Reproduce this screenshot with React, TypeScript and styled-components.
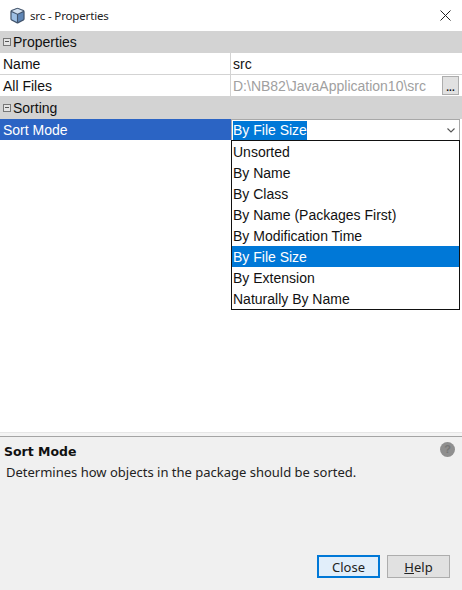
import React from "react";
import styled, { createGlobalStyle } from "styled-components";

const GlobalStyle = createGlobalStyle`
  html, body { margin: 0; padding: 0; background: #fff; }
  * { box-sizing: border-box; }
`;

const SORT_MODES = [
  "Unsorted",
  "By Name",
  "By Class",
  "By Name (Packages First)",
  "By Modification Time",
  "By File Size",
  "By Extension",
  "Naturally By Name",
];

const App = () => (
  <>
    <GlobalStyle />
    <Dialog>
      <TitleBar>
        <CubeIcon />
        <Title>src - Properties</Title>
        <CloseIcon />
      </TitleBar>
      <Sheet>
        <Section title="Properties" />
        <Row $height={22} $ruled>
          <NameCell>Name</NameCell>
          <ValueCell>src</ValueCell>
        </Row>
        <Row $height={21}>
          <NameCell>All Files</NameCell>
          <ValueCell $disabled>
            D:\NB82\JavaApplication10\src
            <BrowseButton>...</BrowseButton>
          </ValueCell>
        </Row>
        <Section title="Sorting" tall />
        <Row $height={21}>
          <NameCell $selected>Sort Mode</NameCell>
          <ComboBox>
            <ComboValue>By File Size</ComboValue>
            <ChevronIcon />
          </ComboBox>
        </Row>
        <ComboList>
          {SORT_MODES.map((mode) => (
            <ComboItem key={mode} $selected={mode === "By File Size"}>
              {mode}
            </ComboItem>
          ))}
        </ComboList>
      </Sheet>
      <Description>
        <DescriptionHeader>
          <DescriptionTitle>Sort Mode</DescriptionTitle>
          <HelpBadge>?</HelpBadge>
        </DescriptionHeader>
        <DescriptionText>
          Determines how objects in the package should be sorted.
        </DescriptionText>
      </Description>
      <Footer>
        <Button $primary>Close</Button>
        <Button>
          <u>H</u>elp
        </Button>
      </Footer>
    </Dialog>
  </>
);

export default App;

const Section = ({ title, tall }: { title: string; tall?: boolean }) => (
  <SectionHeader $tall={tall}>
    <Toggle />
    {title}
  </SectionHeader>
);

const CubeIcon = () => (
  <svg width="15" height="17" viewBox="0 0 16 18" style={{ flexShrink: 0 }}>
    <path d="M8 0.6 Q8.6 0.6 14 2.8 Q15.6 3.5 15.6 5 V12.8 Q15.6 13.8 14.5 14.4 L9 17.2 Q8 17.6 7 17.2 L1.5 14.4 Q0.4 13.8 0.4 12.8 V5 Q0.4 3.5 2 2.8 Q7.4 0.6 8 0.6 Z" fill="#42546c" />
    <path d="M8 1.8 L14 4.3 L8 7.1 L2 4.3 Z" fill="#d3e1f1" />
    <path d="M7.4 8 V15.9 L1.7 13 V5.4 Z" fill="#9dbfe4" />
    <path d="M8.6 8 V15.9 L14.3 13 V5.4 Z" fill="#5f86b6" />
  </svg>
);

const CloseIcon = () => (
  <svg width="11" height="11" viewBox="0 0 11 11" style={{ flexShrink: 0 }}>
    <path d="M0.5 0.5 L10.5 10.5 M10.5 0.5 L0.5 10.5" stroke="#222" strokeWidth="1" />
  </svg>
);

const ChevronIcon = () => (
  <svg width="8" height="5" viewBox="0 0 8 5" style={{ flexShrink: 0 }}>
    <path d="M0.5 0.5 L4 4 L7.5 0.5" fill="none" stroke="#555" strokeWidth="1.1" />
  </svg>
);

const Dialog = styled.div`
  width: 462px;
  height: 590px;
  display: flex;
  flex-direction: column;
  overflow: hidden;
  background: #fff;
  color: #111;
  font-family: "Liberation Sans", Arial, sans-serif;
  font-size: 14px;
`;

const TitleBar = styled.div`
  height: 31px;
  flex-shrink: 0;
  display: flex;
  align-items: center;
  padding: 0 11px 1px 10px;
  gap: 5px;
`;

const Title = styled.div`
  flex: 1;
  font-family: "Noto Sans", sans-serif;
  font-size: 11.5px;
  letter-spacing: -0.15px;
  color: #222;
`;

const Sheet = styled.div`
  position: relative;
  flex: 1;
  display: flex;
  flex-direction: column;
  background: #fff;
`;

const SectionHeader = styled.div<{ $tall?: boolean }>`
  height: ${(p) => (p.$tall ? "23px" : "22px")};
  display: flex;
  align-items: center;
  gap: 2px;
  padding-left: 3px;
  background: #d3d3d3;
`;

const Toggle = styled.span`
  position: relative;
  width: 8px;
  height: 8px;
  border: 1px solid #777;
  background: #e4e4e4;
  &::after {
    content: "";
    position: absolute;
    left: 1px;
    right: 1px;
    top: 2px;
    height: 1px;
    background: #555;
  }
`;

const Row = styled.div<{ $height: number; $ruled?: boolean }>`
  height: ${(p) => p.$height}px;
  display: flex;
  border-bottom: ${(p) => (p.$ruled ? "1px solid #d3d3d3" : "none")};
`;

const NameCell = styled.div<{ $selected?: boolean }>`
  width: 231px;
  display: flex;
  align-items: center;
  padding-left: 3px;
  border-right: 1px solid ${(p) => (p.$selected ? "#2b64c4" : "#d3d3d3")};
  background: ${(p) => (p.$selected ? "#2b64c4" : "#fff")};
  color: ${(p) => (p.$selected ? "#fff" : "#111")};
`;

const ValueCell = styled.div<{ $disabled?: boolean }>`
  position: relative;
  flex: 1;
  display: flex;
  align-items: center;
  padding-left: 2px;
  color: ${(p) => (p.$disabled ? "#a0a0a0" : "#111")};
`;

const BrowseButton = styled.span`
  position: absolute;
  top: 1px;
  right: 3px;
  width: 17px;
  height: 19px;
  display: flex;
  align-items: flex-end;
  justify-content: center;
  border: 1px solid #adadad;
  background: #e1e1e1;
  color: #111;
  font-weight: bold;
  font-size: 10px;
  line-height: 12px;
`;

const ComboBox = styled.div`
  flex: 1;
  display: flex;
  align-items: center;
  justify-content: space-between;
  padding: 0 4px 0 1px;
  margin-right: 2px;
  border: 1px solid #a8a8a8;
  border-bottom: none;
  background: #fff;
`;

const ComboValue = styled.span`
  background: #0078d7;
  color: #fff;
  line-height: 19px;
`;

const ComboList = styled.div`
  position: absolute;
  left: 231px;
  top: 109px;
  width: 229px;
  height: 170px;
  border: 1px solid #111;
  background: #fff;
  z-index: 1;
`;

const ComboItem = styled.div<{ $selected?: boolean }>`
  height: 21px;
  line-height: 22px;
  padding-left: 1px;
  background: ${(p) => (p.$selected ? "#0078d7" : "transparent")};
  color: ${(p) => (p.$selected ? "#fff" : "#111")};
`;

const Description = styled.div`
  height: 103px;
  flex-shrink: 0;
  padding: 7px 7px 0 6px;
  border-top: 1px solid #e6e6e6;
  background: #f0f0f0;
  box-shadow: inset 0 3px 0 #f4f4f4, inset 0 4px 0 #a4a4a4;
`;

const DescriptionHeader = styled.div`
  height: 22px;
  display: flex;
  justify-content: space-between;
  margin-left: -2px;
`;

const DescriptionTitle = styled.div`
  align-self: center;
  font-family: "DejaVu Sans", sans-serif;
  font-weight: bold;
  font-size: 12.5px;
`;

const HelpBadge = styled.div`
  width: 15px;
  height: 15px;
  margin-top: 2px;
  border-radius: 50%;
  background: #8f8f8f;
  color: #777;
  font-size: 11px;
  font-weight: bold;
  line-height: 15px;
  text-align: center;
`;

const DescriptionText = styled.div`
  margin-top: 1px;
  font-family: "Noto Sans", sans-serif;
  font-size: 13px;
  color: #222;
`;

const Footer = styled.div`
  height: 55px;
  flex-shrink: 0;
  display: flex;
  justify-content: flex-end;
  gap: 7px;
  padding: 20px 12px 0 0;
  background: #f0f0f0;
`;

const Button = styled.div<{ $primary?: boolean }>`
  width: 63px;
  height: 23px;
  display: flex;
  align-items: center;
  justify-content: center;
  border: ${(p) => (p.$primary ? "2px solid #0078d7" : "1px solid #adadad")};
  background: ${(p) => (p.$primary ? "#e1eefa" : "#e1e1e1")};
  font-family: "Noto Sans", sans-serif;
  font-size: 13px;
  color: #222;
`;
